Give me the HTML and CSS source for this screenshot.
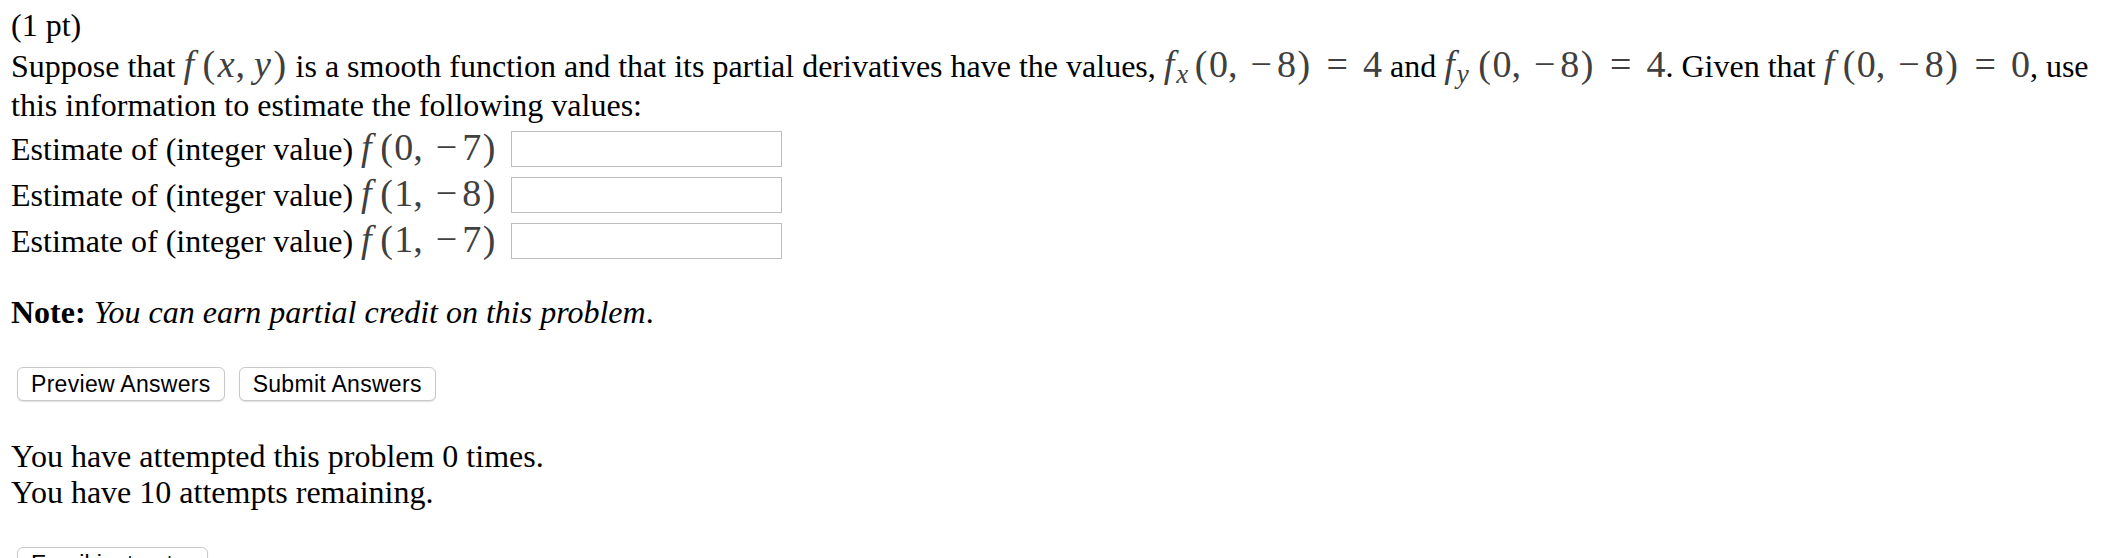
FILE: index.html
```html
<!DOCTYPE html>
<html>
<head>
<meta charset="utf-8">
<title>Problem</title>
<link rel="stylesheet" href="styles.css">
</head>
<body>
<div class="page">
  <div class="intro">(1 pt)<br>Suppose that <span class="math"><i class="f">f</i><span class="p">(</span><i class="v">x</i>,<span class="ts"></span><i class="v">y</i><span class="p">)</span></span> is a smooth function and that its partial derivatives have the values, <span class="math"><i class="f">f</i><sub><i>x</i></sub><span class="p">(</span>0,<span class="ts"></span><span class="op">−</span>8<span class="p">)</span><span class="rel">=</span>4</span> and <span class="math"><i class="f">f</i><sub class="sy"><i>y</i></sub><span class="p">(</span>0,<span class="ts"></span><span class="op">−</span>8<span class="p">)</span><span class="rel">=</span>4</span>. Given that <span class="math"><i class="f">f</i><span class="p">(</span>0,<span class="ts"></span><span class="op">−</span>8<span class="p">)</span><span class="rel">=</span>0</span>, use this information to estimate the following values:</div>
  <div class="rows">
    <div class="row"><span class="label">Estimate of (integer value) <span class="math"><i class="f">f</i><span class="p">(</span>0,<span class="ts"></span><span class="op">−</span>7<span class="p">)</span></span></span><input class="answer" type="text"></div>
    <div class="row"><span class="label">Estimate of (integer value) <span class="math"><i class="f">f</i><span class="p">(</span>1,<span class="ts"></span><span class="op">−</span>8<span class="p">)</span></span></span><input class="answer" type="text"></div>
    <div class="row"><span class="label">Estimate of (integer value) <span class="math"><i class="f">f</i><span class="p">(</span>1,<span class="ts"></span><span class="op">−</span>7<span class="p">)</span></span></span><input class="answer" type="text"></div>
  </div>
  <p class="note"><b>Note:</b> <i>You can earn partial credit on this problem</i>.</p>
  <div class="buttons">
    <button class="btn" type="button">Preview Answers</button>
    <button class="btn" type="button">Submit Answers</button>
  </div>
  <p class="attempts">You have attempted this problem 0 times.<br>You have 10 attempts remaining.</p>
  <div class="buttons">
    <button class="btn" type="button">Email instructor</button>
  </div>
</div>
</body>
</html>
```
FILE: styles.css
```css
html, body {
  margin: 0;
  padding: 0;
  background: #ffffff;
}
.page {
  padding: 6px 11px 0 11px;
  font-family: "Liberation Serif", "Times New Roman", serif;
  font-size: 32px;
  color: #000000;
}
.intro {
  line-height: 39px;
}
.math {
  font-family: "Liberation Serif", "Times New Roman", serif;
  font-size: 38px;
  line-height: 1;
  color: #404040;
  white-space: nowrap;
}
.math i {
  font-style: italic;
}
.math .f {
  padding-right: 7px;
}
.math .v {
  padding: 0 1px;
}
.math .p {
  padding: 0 1.5px;
}
.math sub {
  font-size: 27px;
  line-height: 0;
  vertical-align: -6px;
  margin-left: -5px;
  margin-right: 5px;
}
.math sub.sy {
  margin-right: 8px;
}
.ts {
  display: inline-block;
  width: 8px;
}
.op {
  padding: 0 5px;
}
.rel {
  padding: 0 15px;
}
.rows {
  margin-top: 1px;
}
.row {
  display: flex;
  align-items: center;
  height: 46px;
}
.label {
  padding-bottom: 3px;
  white-space: nowrap;
}
.answer {
  box-sizing: border-box;
  width: 271px;
  height: 36px;
  margin: 0 0 0 14px;
  border: 1px solid #bdbdbd;
  background: #ffffff;
  padding: 0 4px;
}
.note {
  margin: 30px 0 0 0;
  line-height: 36px;
}
.buttons {
  display: flex;
  gap: 14px;
  padding-left: 6px;
  margin-top: 37px;
}
.btn {
  box-sizing: border-box;
  height: 34px;
  padding: 0 13px;
  font-family: "Liberation Sans", Arial, sans-serif;
  font-size: 23px;
  letter-spacing: 0.3px;
  color: #000000;
  background: #ffffff;
  border: 1px solid #c9c9c9;
  border-radius: 6px;
  box-shadow: 0 1px 1px rgba(0, 0, 0, 0.12);
}
.attempts {
  margin: 37px 0 0 0;
  line-height: 36px;
}
.attempts + .buttons {
  margin-top: 37px;
}
```
